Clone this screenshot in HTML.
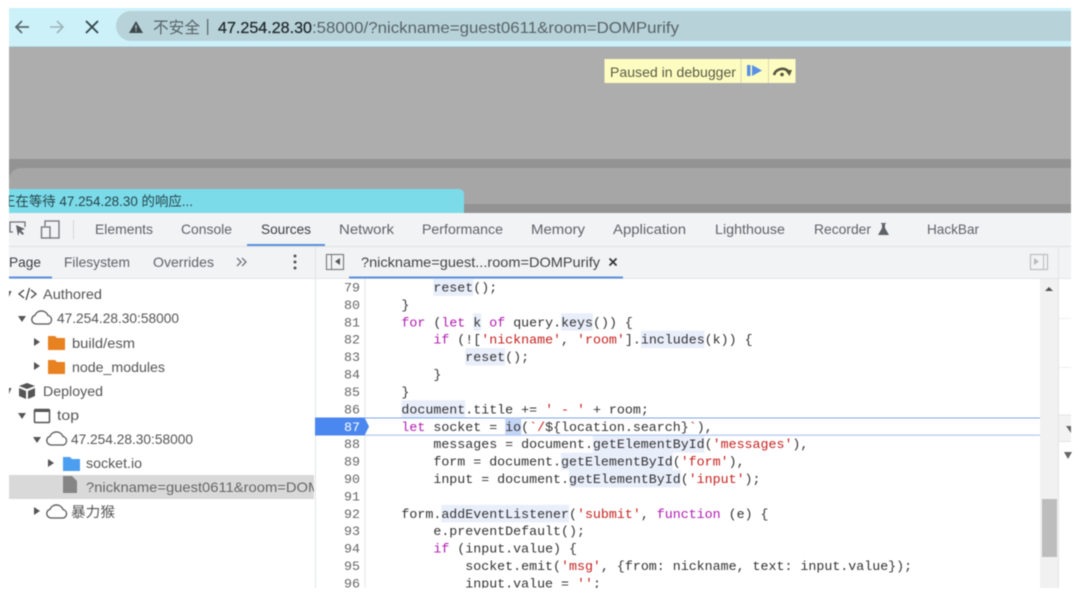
<!DOCTYPE html>
<html><head><meta charset="utf-8"><style>
html,body{margin:0;padding:0;background:#fff;width:1080px;height:610px;overflow:hidden}
svg{display:block;filter:blur(.45px)}
text{font-family:"Liberation Sans","Noto Sans CJK SC",sans-serif;white-space:pre}
.t{font-size:14px;fill:#5f6368}
.d{font-size:14px;fill:#555}
.u{font-size:16px;fill:#566468}
.c{font-family:"Liberation Mono",monospace;font-size:13.3px;fill:#333}
.n{font-family:"Liberation Mono",monospace;font-size:13.3px;fill:#666;text-anchor:end}
.k{fill:#b01ab0}.s{fill:#c5221f}
</style></head><body>
<svg width="1080" height="610" viewBox="0 0 1080 610" xmlns="http://www.w3.org/2000/svg">
<defs>
<clipPath id="cl"><rect x="9" y="470" width="305" height="32"/></clipPath>
<clipPath id="cc"><rect x="316" y="278" width="725" height="310"/></clipPath>
<clipPath id="cs"><rect x="9" y="189" width="300" height="24"/></clipPath>
</defs>
<rect width="1080" height="610" fill="#fff"/>
<!-- toolbar -->
<rect x="9" y="8" width="1062" height="39" fill="#cdf1f8"/>
<path d="M131 11H1071V41H131a15 15 0 0 1 0-30z" fill="#b8d2d9"/>
<path d="M29 27H16M22 21l-6 6 6 6" fill="none" stroke="#55666b" stroke-width="1.7"/>
<path d="M50 27H63M57 21l6 6-6 6" fill="none" stroke="#9db4ba" stroke-width="1.6"/>
<path d="M86 21l12 12M98 21L86 33" fill="none" stroke="#33484d" stroke-width="1.9"/>
<path d="M136 21l7 12h-14z" fill="#3c4a4e"/>
<rect x="135.400" y="25" width="1.200" height="4" fill="#b8d2d9"/>
<rect x="135.400" y="30" width="1.200" height="1.200" fill="#b8d2d9"/>
<text x="153" y="33" class="u" textLength="47" lengthAdjust="spacingAndGlyphs">不安全</text>
<rect x="207" y="19" width="1.300" height="16" fill="#5b6a6e"/>
<text x="218" y="33" class="u" style="fill:#202b2e;stroke:#202b2e;stroke-width:.25" textLength="94" lengthAdjust="spacingAndGlyphs">47.254.28.30</text>
<text x="312" y="33" class="u" textLength="367" lengthAdjust="spacingAndGlyphs">:58000/?nickname=guest0611&amp;room=DOMPurify</text>
<!-- page -->
<rect x="9" y="47" width="1062" height="166" fill="#adadad"/>
<rect x="9" y="46.500" width="1062" height="1.500" fill="#a2b3b7"/>
<rect x="9" y="159" width="1062" height="54" fill="#939393"/>
<path d="M21 168H1071V204H9V180a12 12 0 0 1 12-12z" fill="#a6a6a6"/>
<!-- paused -->
<rect x="604.500" y="59" width="191" height="24" fill="#fdfdc2"/>
<text x="610" y="77" style="font-size:14px;fill:#5a5a45" textLength="126" lengthAdjust="spacingAndGlyphs">Paused in debugger</text>
<rect x="740.500" y="59" width="1" height="24" fill="#d8d8b0"/>
<rect x="768" y="59" width="1" height="24" fill="#d8d8b0"/>
<rect x="747" y="65" width="3.500" height="11" fill="#5b8fe6"/>
<path d="M752 65l10 5.500-10 5.500z" fill="#5b8fe6"/>
<path d="M774 75a8.500 8 0 0 1 14-4" fill="none" stroke="#55553f" stroke-width="2.600"/>
<path d="M785 70h7l-2.500 6z" fill="#55553f"/>
<circle cx="782" cy="74.500" r="1.800" fill="#55553f"/>
<!-- status -->
<path d="M9 189H459a5 5 0 0 1 5 5V213H9z" fill="#7cdbe9"/>
<g clip-path="url(#cs)"><text x="2" y="206" style="font-size:13.500px;fill:#25464c" textLength="191" lengthAdjust="spacingAndGlyphs">正在等待 47.254.28.30 的响应...</text></g>
<!-- devtools -->
<rect x="9" y="213" width="1062" height="65" fill="#f1f3f4"/>
<rect x="9" y="246" width="1062" height="1" fill="#e0e1e3"/>
<rect x="9" y="278" width="1062" height="1" fill="#e4e5e7"/>
<path d="M13 232H10V222H25V227" fill="none" stroke="#6e7276" stroke-width="1.300"/>
<path d="M16 225l9 4-4 1.500 3 3-1.500 1.500-3-3-1.500 4z" fill="#5f6368"/>
<path d="M45 226V221H59V238H50" fill="none" stroke="#6e7276" stroke-width="1.300"/>
<rect x="41.500" y="227" width="8.500" height="11" fill="none" stroke="#6e7276" stroke-width="1.300"/>
<rect x="73" y="220" width="1" height="19" fill="#d5d6d8"/>
<text x="95" y="234" class="t" textLength="58" lengthAdjust="spacingAndGlyphs">Elements</text>
<text x="181" y="234" class="t" textLength="51" lengthAdjust="spacingAndGlyphs">Console</text>
<text x="261" y="234" class="t" style="fill:#3c4043" textLength="50" lengthAdjust="spacingAndGlyphs">Sources</text>
<text x="339" y="234" class="t" textLength="55" lengthAdjust="spacingAndGlyphs">Network</text>
<text x="422" y="234" class="t" textLength="81" lengthAdjust="spacingAndGlyphs">Performance</text>
<text x="531" y="234" class="t" textLength="54" lengthAdjust="spacingAndGlyphs">Memory</text>
<text x="613" y="234" class="t" textLength="73" lengthAdjust="spacingAndGlyphs">Application</text>
<text x="715" y="234" class="t" textLength="70" lengthAdjust="spacingAndGlyphs">Lighthouse</text>
<text x="814" y="234" class="t" textLength="57" lengthAdjust="spacingAndGlyphs">Recorder</text>
<path d="M881 223h5v1h-1v4l4 7h-11l4-7v-4h-1z" fill="#5f6368"/>
<text x="927" y="234" class="t" textLength="52" lengthAdjust="spacingAndGlyphs">HackBar</text>
<rect x="247" y="244" width="78" height="2" fill="#5a8fe0"/>
<!-- subtabs -->
<text x="9" y="267" class="t" style="fill:#3c4043" textLength="32" lengthAdjust="spacingAndGlyphs">Page</text>
<text x="64" y="267" class="t" textLength="66" lengthAdjust="spacingAndGlyphs">Filesystem</text>
<text x="153" y="267" class="t" textLength="61" lengthAdjust="spacingAndGlyphs">Overrides</text>
<path d="M237 258l4 4-4 4M242 258l4 4-4 4" fill="none" stroke="#5f6368" stroke-width="1.200"/>
<circle cx="295" cy="256" r="1.500" fill="#555"/><circle cx="295" cy="262" r="1.500" fill="#555"/><circle cx="295" cy="268" r="1.500" fill="#555"/>
<rect x="9" y="276.500" width="43" height="2" fill="#5a8fe0"/>
<rect x="315" y="246" width="1" height="342" fill="#e2e3e5"/>
<rect x="326.500" y="254.500" width="17" height="15" fill="none" stroke="#777" stroke-width="1.100"/>
<rect x="331" y="254.500" width="1" height="15" fill="#777"/>
<path d="M340 258v7l-5-3.500z" fill="#555"/>
<text x="361" y="267" class="t" style="fill:#444" textLength="239" lengthAdjust="spacingAndGlyphs">?nickname=guest...room=DOMPurify</text>
<path d="M609.500 258.500l7 7M616.500 258.500l-7 7" stroke="#333" stroke-width="1.700" fill="none"/>
<rect x="349" y="276.500" width="274" height="2" fill="#5a8fe0"/>
<rect x="1030.500" y="254.500" width="17" height="15" fill="none" stroke="#bbb" stroke-width="1.100"/>
<rect x="1043" y="254.500" width="1" height="15" fill="#bbb"/>
<path d="M1034 258v7l5-3.500z" fill="#bbb"/>
<!-- tree -->
<rect x="9" y="475" width="305" height="24" fill="#d9d9d9"/>
<path d="M9 291v6l2.500-6z" fill="#555"/>
<path d="M24 290l-5 4 5 4M31 290l5 4-5 4M29.500 288l-3.500 12" fill="none" stroke="#444" stroke-width="1.300"/>
<text x="43" y="299" class="d" textLength="59" lengthAdjust="spacingAndGlyphs">Authored</text>
<path d="M18 316h8l-4 6z" fill="#555"/>
<path id="cl1" d="M36 324a4.500 4.500 0 0 1-1-8.800 7 7 0 0 1 13 .3 4.400 4.400 0 0 1 .5 8.500z" fill="none" stroke="#555" stroke-width="1.300"/>
<text x="57" y="323" class="d" textLength="122" lengthAdjust="spacingAndGlyphs">47.254.28.30:58000</text>
<path d="M34 338v8l6-4z" fill="#555"/>
<path d="M48 336h7l2 2h8v12H48z" fill="#e8811f"/>
<text x="72" y="348" class="d" textLength="63" lengthAdjust="spacingAndGlyphs">build/esm</text>
<path d="M34 362v8l6-4z" fill="#555"/>
<path d="M48 360h7l2 2h8v12H48z" fill="#e8811f"/>
<text x="72" y="372" class="d" textLength="93" lengthAdjust="spacingAndGlyphs">node_modules</text>
<path d="M9 388v6l2.500-6z" fill="#555"/>
<path d="M27 383l8 3-8 3-8-3z" fill="#555"/>
<path d="M19 388l7 3v8l-7-3zM35 388l-7 3v8l7-3z" fill="#555"/>
<text x="43" y="396" class="d" textLength="60" lengthAdjust="spacingAndGlyphs">Deployed</text>
<path d="M18 413h8l-4 6z" fill="#555"/>
<rect x="34.500" y="409.500" width="15" height="13" rx="1" fill="none" stroke="#555" stroke-width="1.500"/>
<rect x="34.500" y="409.500" width="15" height="2.500" fill="#555"/>
<text x="57" y="420" class="d" textLength="22" lengthAdjust="spacingAndGlyphs">top</text>
<path d="M33 437h8l-4 6z" fill="#555"/>
<use href="#cl1" x="15" y="121"/>
<text x="71" y="444" class="d" textLength="122" lengthAdjust="spacingAndGlyphs">47.254.28.30:58000</text>
<path d="M48 459v8l6-4z" fill="#555"/>
<path d="M63 457h7l2 2h8v12H63z" fill="#4b9ef0"/>
<text x="86" y="468" class="d" textLength="56" lengthAdjust="spacingAndGlyphs">socket.io</text>
<path d="M63 476h9l5 5v12H63z" fill="#858585"/>
<g clip-path="url(#cl)"><text x="86" y="492" class="d" style="fill:#666" textLength="272" lengthAdjust="spacingAndGlyphs">?nickname=guest0611&amp;room=DOMPurify</text></g>
<path d="M34 507v8l6-4z" fill="#555"/>
<use href="#cl1" x="15" y="194"/>
<text x="71" y="517" class="d" textLength="44" lengthAdjust="spacingAndGlyphs">暴力猴</text>
<!-- code -->
<rect x="364.500" y="279" width="1" height="309" fill="#e8e8e8"/>
<g fill="#e9eefb">
<rect x="433.300" y="278.500" width="39.900" height="17.400"/>
<rect x="473.200" y="313.300" width="8" height="17.400"/>
<rect x="561" y="313.300" width="32" height="17.400"/>
<rect x="640.800" y="330.700" width="63.800" height="17.400"/>
<rect x="465.300" y="348.100" width="39.900" height="17.400"/>
<rect x="401.400" y="400.300" width="63.800" height="17.400"/>
<rect x="592.900" y="435.200" width="111.700" height="17.400"/>
<rect x="561" y="452.600" width="111.700" height="17.400"/>
<rect x="569" y="470" width="111.700" height="17.400"/>
<rect x="441.300" y="504.900" width="127.700" height="17.400"/>
</g>
<rect x="365" y="417.500" width="675" height="1" fill="#7ea6ec"/>
<rect x="365" y="434.500" width="675" height="1.300" fill="#b4cbf5"/>
<rect x="505.200" y="418" width="16" height="16.500" fill="#c4d4f5"/>
<path d="M315 417.500H364.500L369 426.500 364.500 435.500H315z" fill="#4a87ee"/>
<g clip-path="url(#cc)">
<text x="360" y="291.500" class="n">79</text>
<text x="360" y="308.900" class="n">80</text>
<text x="360" y="326.300" class="n">81</text>
<text x="360" y="343.700" class="n">82</text>
<text x="360" y="361.100" class="n">83</text>
<text x="360" y="378.600" class="n">84</text>
<text x="360" y="396" class="n">85</text>
<text x="360" y="413.400" class="n">86</text>
<text x="360" y="430.800" class="n" style="fill:#fff">87</text>
<text x="360" y="448.200" class="n">88</text>
<text x="360" y="465.600" class="n">89</text>
<text x="360" y="483" class="n">90</text>
<text x="360" y="500.400" class="n">91</text>
<text x="360" y="517.800" class="n">92</text>
<text x="360" y="535.200" class="n">93</text>
<text x="360" y="552.600" class="n">94</text>
<text x="360" y="570" class="n">95</text>
<text x="360" y="587.400" class="n">96</text>
<text x="369.500" y="291.500" class="c" xml:space="preserve">        reset();</text>
<text x="369.500" y="308.900" class="c" xml:space="preserve">    }</text>
<text x="369.500" y="326.300" class="c" xml:space="preserve">    <tspan class="k">for</tspan> (<tspan class="k">let</tspan> k <tspan class="k">of</tspan> query.keys()) {</text>
<text x="369.500" y="343.700" class="c" xml:space="preserve">        <tspan class="k">if</tspan> (![<tspan class="s">'nickname'</tspan>, <tspan class="s">'room'</tspan>].includes(k)) {</text>
<text x="369.500" y="361.100" class="c" xml:space="preserve">            reset();</text>
<text x="369.500" y="378.600" class="c" xml:space="preserve">        }</text>
<text x="369.500" y="396" class="c" xml:space="preserve">    }</text>
<text x="369.500" y="413.400" class="c" xml:space="preserve">    document.title += <tspan class="s">' - '</tspan> + room;</text>
<text x="369.500" y="430.800" class="c" xml:space="preserve">    <tspan class="k">let</tspan> socket = io(<tspan class="s">`/</tspan>${location.search}<tspan class="s">`</tspan>),</text>
<text x="369.500" y="448.200" class="c" xml:space="preserve">        messages = document.getElementById(<tspan class="s">'messages'</tspan>),</text>
<text x="369.500" y="465.600" class="c" xml:space="preserve">        form = document.getElementById(<tspan class="s">'form'</tspan>),</text>
<text x="369.500" y="483" class="c" xml:space="preserve">        input = document.getElementById(<tspan class="s">'input'</tspan>);</text>
<text x="369.500" y="517.800" class="c" xml:space="preserve">    form.addEventListener(<tspan class="s">'submit'</tspan>, <tspan class="k">function</tspan> (e) {</text>
<text x="369.500" y="535.200" class="c" xml:space="preserve">        e.preventDefault();</text>
<text x="369.500" y="552.600" class="c" xml:space="preserve">        <tspan class="k">if</tspan> (input.value) {</text>
<text x="369.500" y="570" class="c" xml:space="preserve">            socket.emit(<tspan class="s">'msg'</tspan>, {from: nickname, text: input.value});</text>
<text x="369.500" y="587.400" class="c" xml:space="preserve">            input.value = <tspan class="s">''</tspan>;</text>
</g>
<!-- scrollbar -->
<rect x="1040" y="279" width="18" height="309" fill="#f1f1f1"/>
<rect x="1058" y="246" width="1" height="342" fill="#e2e3e5"/>
<path d="M1045 291l4-4 4 4z" fill="#505050"/>
<rect x="1042" y="499" width="15" height="58" fill="#bdbdbd"/>
<!-- right panel -->
<rect x="1059" y="318" width="12" height="1" fill="#eee"/>
<rect x="1059" y="367" width="12" height="1" fill="#eee"/>
<rect x="1059" y="415" width="12" height="26" fill="#f3f3f3"/>
<rect x="1059" y="414.500" width="12" height="1" fill="#e4e4e4"/>
<rect x="1059" y="441" width="12" height="1" fill="#e4e4e4"/>
<path d="M1066 426h5v7z" fill="#666"/>
<path d="M1064 452h8l-4 7z" fill="#666"/>
</svg>
</body></html>
